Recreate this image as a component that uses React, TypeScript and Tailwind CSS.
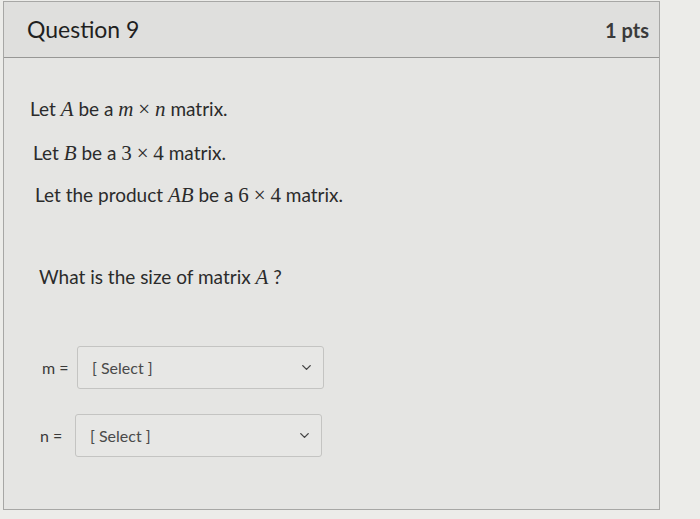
import { ChevronDown } from "lucide-react";

const sans = "font-['Lato','Open_Sans',sans-serif]";
const math = "font-['Liberation_Serif','DejaVu_Serif',serif]";

function V({ children }: { children: React.ReactNode }) {
  return <span className={`${math} italic text-[21px]`}>{children}</span>;
}

function N({ children }: { children: React.ReactNode }) {
  return <span className={`${math} text-[21px]`}>{children}</span>;
}

function SelectRow({ label, ml }: { label: string; ml: string }) {
  return (
    <div className={`flex items-center ${ml}`}>
      <span className="w-[35px] text-[16px] text-[#3a3a3a]">{label} =</span>
      <div className="flex h-[43px] w-[247px] items-center justify-between rounded-[3px] border border-[#c4c4c2] bg-[#e7e7e5] pl-[14px] pr-[9px]">
        <span className="text-[16px] text-[#4a4a4a]">[ Select ]</span>
        <ChevronDown size={15} strokeWidth={2.2} className="text-[#444]" />
      </div>
    </div>
  );
}

export default function App() {
  return (
    <div className={`h-[519px] w-[700px] overflow-hidden bg-[#ecece9] pl-[3px] pt-[1px] ${sans} text-[#2b2b2b]`}>
      <div className="h-[509px] w-[657px] border border-[#a7a7a5] bg-[#e5e5e3]">
        <div className="flex h-[56px] items-center justify-between border-b border-[#979795] bg-[#dfdfdd] pl-[23px] pr-[10px]">
          <h2 className="text-[23px] text-[#1f1f1f]">Question 9</h2>
          <span className="text-[20px] font-bold text-[#3a3a3a]">1 pts</span>
        </div>

        <div className="flex flex-col text-[19px] leading-[26px]">
          <p className="ml-[26px] mt-[38px]">
            Let <V>A</V> be a <V>m</V> <N>×</N> <V>n</V> matrix.
          </p>
          <p className="ml-[29px] mt-[18px]">
            Let <V>B</V> be a <N>3</N> <N>×</N> <N>4</N> matrix.
          </p>
          <p className="ml-[31px] mt-[16px]">
            Let the product <V>AB</V> be a <N>6</N> <N>×</N> <N>4</N> matrix.
          </p>
          <p className="ml-[35px] mt-[56px]">
            What is the size of matrix <V>A</V> ?
          </p>

          <div className="mt-[56px] flex flex-col gap-[25px]">
            <SelectRow label="m" ml="ml-[38px]" />
            <SelectRow label="n" ml="ml-[36px]" />
          </div>
        </div>
      </div>
    </div>
  );
}
